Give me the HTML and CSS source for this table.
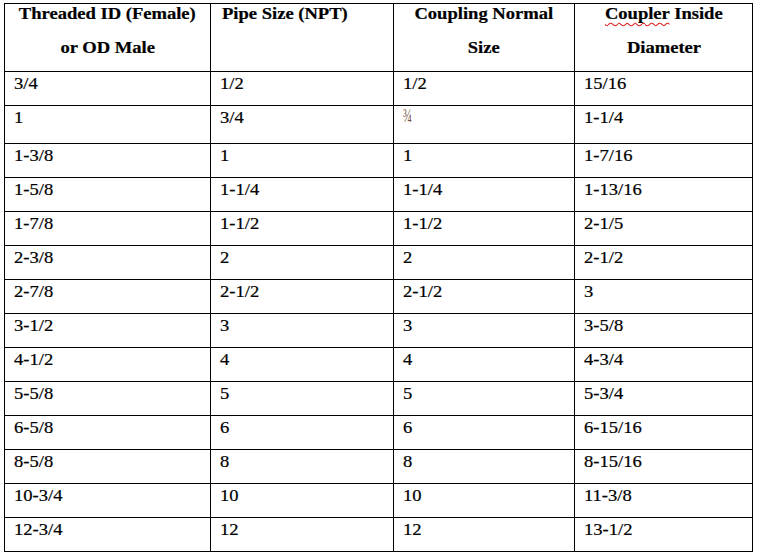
FILE: index.html
```html
<!DOCTYPE html>
<html lang="en">
<head>
<meta charset="utf-8">
<title>Coupling sizes</title>
<link rel="stylesheet" href="styles.css">
</head>
<body>
<table class="sizes">
  <colgroup>
    <col class="c1"><col class="c2"><col class="c3"><col class="c4">
  </colgroup>
  <thead>
    <tr>
      <th><div class="hl"><span class="sx">Threaded ID (Female)</span></div><div class="hl"><span class="sx">or OD Male</span></div></th>
      <th class="left"><div class="hl"><span class="sx">Pipe Size (NPT)</span></div></th>
      <th><div class="hl"><span class="sx">Coupling Normal</span></div><div class="hl"><span class="sx">Size</span></div></th>
      <th><div class="hl"><span class="sx"><span class="spell">Coupler</span> Inside</span></div><div class="hl"><span class="sx">Diameter</span></div></th>
    </tr>
  </thead>
  <tbody>
    <tr><td><span class="sx">3/4</span></td><td><span class="sx">1/2</span></td><td><span class="sx">1/2</span></td><td><span class="sx">15/16</span></td></tr>
    <tr class="tall"><td><span class="sx">1</span></td><td><span class="sx">3/4</span></td><td><span class="frac">¾</span></td><td><span class="sx">1-1/4</span></td></tr>
    <tr><td><span class="sx">1-3/8</span></td><td><span class="sx">1</span></td><td><span class="sx">1</span></td><td><span class="sx">1-7/16</span></td></tr>
    <tr><td><span class="sx">1-5/8</span></td><td><span class="sx">1-1/4</span></td><td><span class="sx">1-1/4</span></td><td><span class="sx">1-13/16</span></td></tr>
    <tr><td><span class="sx">1-7/8</span></td><td><span class="sx">1-1/2</span></td><td><span class="sx">1-1/2</span></td><td><span class="sx">2-1/5</span></td></tr>
    <tr><td><span class="sx">2-3/8</span></td><td><span class="sx">2</span></td><td><span class="sx">2</span></td><td><span class="sx">2-1/2</span></td></tr>
    <tr><td><span class="sx">2-7/8</span></td><td><span class="sx">2-1/2</span></td><td><span class="sx">2-1/2</span></td><td><span class="sx">3</span></td></tr>
    <tr><td><span class="sx">3-1/2</span></td><td><span class="sx">3</span></td><td><span class="sx">3</span></td><td><span class="sx">3-5/8</span></td></tr>
    <tr><td><span class="sx">4-1/2</span></td><td><span class="sx">4</span></td><td><span class="sx">4</span></td><td><span class="sx">4-3/4</span></td></tr>
    <tr><td><span class="sx">5-5/8</span></td><td><span class="sx">5</span></td><td><span class="sx">5</span></td><td><span class="sx">5-3/4</span></td></tr>
    <tr><td><span class="sx">6-5/8</span></td><td><span class="sx">6</span></td><td><span class="sx">6</span></td><td><span class="sx">6-15/16</span></td></tr>
    <tr><td><span class="sx">8-5/8</span></td><td><span class="sx">8</span></td><td><span class="sx">8</span></td><td><span class="sx">8-15/16</span></td></tr>
    <tr><td><span class="sx">10-3/4</span></td><td><span class="sx">10</span></td><td><span class="sx">10</span></td><td><span class="sx">11-3/8</span></td></tr>
    <tr><td><span class="sx">12-3/4</span></td><td><span class="sx">12</span></td><td><span class="sx">12</span></td><td><span class="sx">13-1/2</span></td></tr>
  </tbody>
</table>
</body>
</html>
```
FILE: styles.css
```css
body {
  margin: 0;
  background: #fff;
  color: #000;
  font-family: "Liberation Serif", "Times New Roman", serif;
}

.sizes {
  border-collapse: collapse;
  table-layout: fixed;
  width: 748px;
  margin: 3px 0 0 4px;
}

.c1 { width: 206px; }
.c2 { width: 183px; }
.c3 { width: 181px; }
.c4 { width: 178px; }

.sizes th,
.sizes td {
  border: 1px solid #000;
  vertical-align: top;
  font-family: "Liberation Serif", "Times New Roman", serif;
  font-size: 16px;
  line-height: 18px;
  white-space: nowrap;
  -webkit-text-stroke: 0.2px #000;
}

.sizes th {
  font-weight: bold;
  text-align: center;
  padding: 1px 0 14px 0;
}

.sizes th.left {
  text-align: left;
  padding-left: 11px;
}

.hl + .hl {
  margin-top: 15.5px;
}

.sizes td {
  text-align: left;
  padding: 3px 0 12px 9px;
}

.sizes tr.tall td {
  padding-bottom: 16px;
}

.sx {
  display: inline-block;
  transform: scaleX(1.16);
  transform-origin: left center;
}

.sizes th .sx {
  transform-origin: center center;
}

.sizes th.left .sx {
  transform-origin: left center;
}

.spell {
  text-decoration-line: underline;
  text-decoration-style: wavy;
  text-decoration-color: #e02020;
  text-decoration-thickness: 1px;
  text-underline-offset: 3px;
}

.frac {
  display: inline-block;
  vertical-align: top;
  height: 18px;
  font-size: 19px;
  line-height: 18px;
  color: #6e4e3e;
  -webkit-text-stroke: 0;
  transform: scaleX(0.63) translateY(-2px);
  transform-origin: left center;
}
```
